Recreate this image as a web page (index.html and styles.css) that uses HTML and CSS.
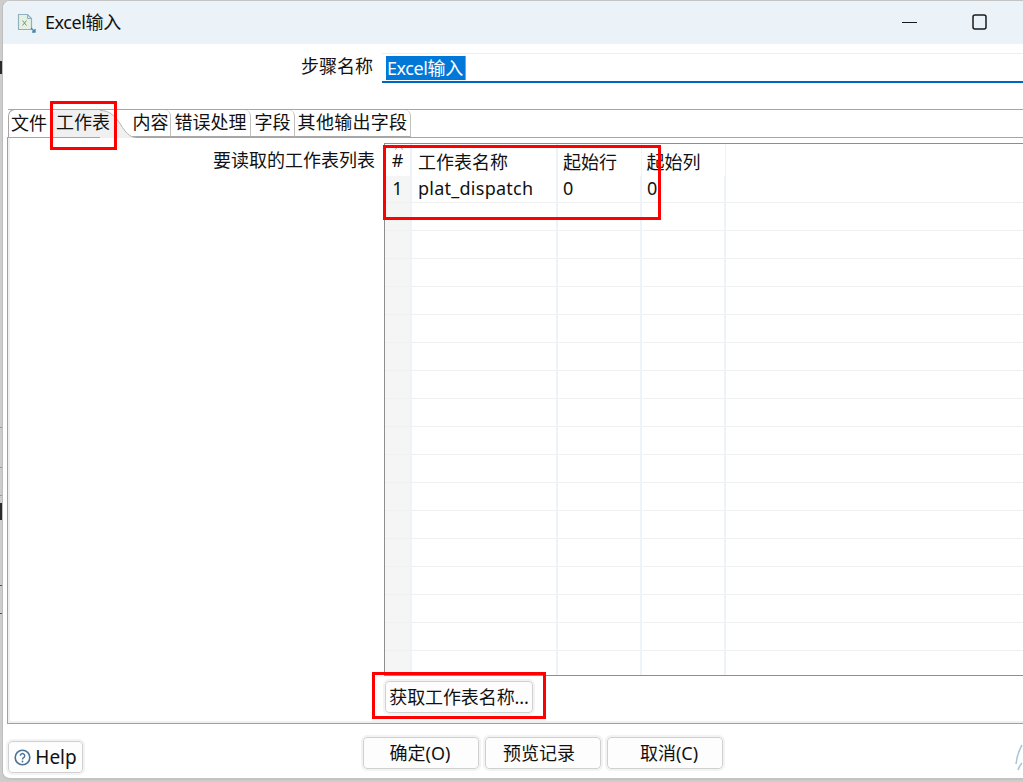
FILE: index.html
```html
<!DOCTYPE html>
<html lang="zh-CN">
<head>
<meta charset="utf-8">
<title>Excel输入</title>
<link rel="stylesheet" href="styles.css">
</head>
<body>
<div class="window">
  <header class="titlebar">
    <svg class="app-icon" width="20" height="22" viewBox="0 0 20 22">
      <path d="M1.5 1.5h9l4 4v11h-13z" fill="#e6f1e4" stroke="#8fb1bd" stroke-width="1.2"/>
      <path d="M10.500 1.500v4h4" fill="none" stroke="#8fb1bd"/>
      <path d="M5.500 7.500l4 5M9.500 7.500l-4 5" stroke="#6f9a78" fill="none"/>
      <path d="M14 15l4 4M18 16v3h-3" stroke="#4f86ad" stroke-width="1.4" fill="none"/>
    </svg>
    <span class="title">Excel输入</span>
    <span class="win-controls">
      <svg width="15" height="14" viewBox="0 0 15 14"><path d="M0 7.500h15" stroke="#1a1a1a"/></svg>
      <svg width="15" height="16" viewBox="0 0 15 16"><rect x="1" y="1" width="13" height="14" rx="2" fill="none" stroke="#1a1a1a" stroke-width="1.500"/></svg>
    </span>
  </header>

  <div class="step-row">
    <label class="field-label">步骤名称</label>
    <div class="step-input"><span class="selected">Excel输入</span></div>
  </div>

  <nav class="tabs">
    <span class="tab first">文件</span>
    <span class="tab active"><span class="active-text">工作表</span></span>
    <svg class="tab-curve" width="36" height="28" viewBox="0 0 36 28"><path d="M0 0C10 0 15 6 21 15C25 22 30 27.500 36 27.500V28H0Z" fill="#f0f0f0"/><path d="M0 .5C10 .5 15 6 21 15C25 22 30 27.500 36 27.500" fill="none" stroke="#b4b4b4"/></svg>
    <span class="tab after-active">内容</span>
    <span class="tab wide-four">错误处理</span>
    <span class="tab">字段</span>
    <span class="tab wide-six">其他输出字段</span>
  </nav>

  <section class="panel">
    <div class="sheet-row">
      <label class="field-label list-label">要读取的工作表列表</label>
      <div class="grid-wrap">
        <table class="grid">
          <colgroup><col class="c0"><col class="c1"><col class="c2"><col class="c3"><col></colgroup>
          <thead><tr><th class="num">#</th><th>工作表名称</th><th>起始行</th><th>起始列</th><th class="fill"></th></tr></thead>
          <tbody>
            <tr class="first-row"><td class="num">1</td><td class="sheet-name">plat_dispatch</td><td>0</td><td>0</td><td></td></tr>
            <tr><td class="num"></td><td></td><td></td><td></td><td></td></tr>
            <tr><td class="num"></td><td></td><td></td><td></td><td></td></tr>
            <tr><td class="num"></td><td></td><td></td><td></td><td></td></tr>
            <tr><td class="num"></td><td></td><td></td><td></td><td></td></tr>
            <tr><td class="num"></td><td></td><td></td><td></td><td></td></tr>
            <tr><td class="num"></td><td></td><td></td><td></td><td></td></tr>
            <tr><td class="num"></td><td></td><td></td><td></td><td></td></tr>
            <tr><td class="num"></td><td></td><td></td><td></td><td></td></tr>
            <tr><td class="num"></td><td></td><td></td><td></td><td></td></tr>
            <tr><td class="num"></td><td></td><td></td><td></td><td></td></tr>
            <tr><td class="num"></td><td></td><td></td><td></td><td></td></tr>
            <tr><td class="num"></td><td></td><td></td><td></td><td></td></tr>
            <tr><td class="num"></td><td></td><td></td><td></td><td></td></tr>
            <tr><td class="num"></td><td></td><td></td><td></td><td></td></tr>
            <tr><td class="num"></td><td></td><td></td><td></td><td></td></tr>
            <tr><td class="num"></td><td></td><td></td><td></td><td></td></tr>
            <tr class="last-row"><td class="num"></td><td></td><td></td><td></td><td></td></tr>
          </tbody>
        </table>
        <svg class="sort-mark" width="10" height="5" viewBox="0 0 10 5"><path d="M1 4.500L5 1l4 3.500" fill="none" stroke="#9a9a9a"/></svg>
      </div>
    </div>
    <div class="get-row"><button class="btn get-btn">获取工作表名称...</button></div>
  </section>

  <footer class="footer">
    <button class="btn help-btn">
      <svg width="17" height="17" viewBox="0 0 17 17"><circle cx="8.500" cy="8.500" r="7.300" fill="#fff" stroke="#4a7396" stroke-width="1.600"/><path d="M6.300 6.700a2.200 2.200 0 1 1 3.400 1.900c-.8.500-1.200.9-1.200 1.800" fill="none" stroke="#4a7396" stroke-width="1.400"/><circle cx="8.500" cy="12.500" r=".9" fill="#4a7396"/></svg>
      Help
    </button>
    <div class="actions">
      <button class="btn action action-ok">确定(O)</button>
      <button class="btn action action-preview">预览记录</button>
      <button class="btn action action-cancel">取消(C)</button>
    </div>
    <svg class="corner-mark" width="8" height="28" viewBox="0 0 8 28"><path d="M1 20C2 12 4 6 7 1M3 26c1-3 2-5 4-7" fill="none" stroke="#a9c3d8" stroke-width="1.500"/></svg>
  </footer>
</div>

<div class="mark mark-tab"></div>
<div class="mark mark-table"></div>
<div class="mark mark-btn"></div>
</body>
</html>
```
FILE: styles.css
```css
* { box-sizing: border-box; }
html, body { margin: 0; height: 100%; overflow: hidden; }
body {
  background-color: #cdcdcd;
  background-image:
    linear-gradient(#2a2a2a, #2a2a2a),
    linear-gradient(#2a2a2a, #2a2a2a),
    linear-gradient(#999, #999),
    linear-gradient(#999, #999),
    linear-gradient(#999, #999),
    linear-gradient(#555, #555),
    linear-gradient(#555, #555);
  background-size: 2px 17px, 2px 13px, 2px 1px, 2px 1px, 2px 1px, 2px 1px, 2px 1px;
  background-position: 0 503px, 0 61px, 0 427px, 0 467px, 0 495px, 0 585px, 0 613px;
  background-repeat: no-repeat;
  font-family: "Noto Sans", "Noto Sans CJK SC", sans-serif;
  font-size: 18px;
  color: #111;
  position: relative;
}
.window {
  position: relative;
  margin-left: 2px;
  width: 1021px;
  height: 780px;
  background: #fff;
  border-top: 1px solid #c4c4c4;
  border-bottom: 2px solid #c4c4c4;
  border-left: 1px solid #bdbdbd;
  border-radius: 8px 0 0 8px;
  overflow: hidden;
  display: flex;
  flex-direction: column;
}
.titlebar {
  height: 43px;
  flex: none;
  background: #ebf3f9;
  display: flex;
  align-items: center;
  padding-left: 14px;
  gap: 8px;
}
.app-icon { flex: none; margin-top: 3px; }
.title { line-height: 24px; letter-spacing: -.4px; margin-top: -1px; }
.win-controls {
  margin-left: auto;
  margin-right: 36px;
  margin-bottom: 2px;
  display: flex;
  align-items: center;
  gap: 55px;
}
.step-row {
  display: flex;
  align-items: center;
  height: 30px;
  margin-top: 9px;
  flex: none;
}
.field-label {
  width: 371px;
  text-align: right;
  line-height: 24px;
  flex: none;
}
.step-row .field-label { margin-top: -5px; margin-left: -1px; }
.step-input {
  margin-left: 9px;
  flex: 1;
  height: 30px;
  border-top: 1px solid #eee;
  border-bottom: 2px solid #0067c0;
  padding: 2px 0 0 4px;
}
.selected {
  display: inline-block;
  height: 24px;
  line-height: 24px;
  width: 80px;
  background: #0078d7;
  color: #fff;
  padding-left: 1px;
  white-space: nowrap;
  letter-spacing: -.4px;
  border-right: 1px solid #e88a3a;
}
.tabs {
  margin: 26px 0 0 5px;
  height: 28px;
  flex: none;
  display: flex;
  border-top: 1px solid #a6a6a6;
  position: relative;
}
.tab {
  height: 27px;
  line-height: 25px;
  white-space: nowrap;
  text-align: center;
  border-right: 1px solid #c0c0c0;
  border-top-right-radius: 6px;
  border-bottom: 1px solid #a6a6a6;
  flex: none;
  width: 44px;
}
.tab.after-active { width: 40px; }
.tab.wide-four { width: 80px; }
.tab.wide-six { width: 116px; letter-spacing: .3px; }
.tab.first {
  border-left: 1px solid #a6a6a6;
  border-right: none;
  border-bottom: none;
  border-top-left-radius: 7px;
  border-top-right-radius: 0;
  width: 44px;
  margin-top: -1px;
  height: 28px;
  border-top: 1px solid #a6a6a6;
  line-height: 27px;
  text-indent: -3px;
}
.tab.active {
  background: #f0f0f0;
  width: 48px;
  border: none;
  border-radius: 6px 0 0 0;
  text-align: left;
  padding-left: 4px;
}
.active-text { position: relative; z-index: 1; }
.tab-curve { flex: none; margin-right: -5px; position: relative; }
.panel {
  margin-left: 4px;
  height: 587px;
  flex: none;
  border-left: 1px solid #a0a0a0;
  border-top: 1px solid #a6a6a6;
  border-bottom: 1px solid #a0a0a0;
  box-shadow: inset 2px 0 0 #f0f0f0, inset 0 -2px 0 #f0f0f0;
  display: flex;
  flex-direction: column;
}
.sheet-row {
  display: flex;
  padding-top: 5px;
  height: 538px;
  flex: none;
}
.list-label {
  width: 367px;
  padding-top: 5px;
  line-height: 24px;
}
.grid-wrap {
  margin-left: 9px;
  flex: 1;
  height: 533px;
  position: relative;
  border-top: 1px solid #8e8e8e;
  border-left: 1px solid #8e8e8e;
  border-bottom: 1px solid #8e8e8e;
  overflow: hidden;
}
.sort-mark { position: absolute; left: 9px; top: 1px; }
.grid {
  width: 100%;
  border-collapse: collapse;
  table-layout: fixed;
}
.c0 { width: 26px; }
.c1 { width: 146px; }
.c2 { width: 84px; }
.c3 { width: 84px; }
.grid th, .grid td {
  font-weight: 400;
  text-align: left;
  padding: 0 0 0 6px;
  border-right: 2px solid #eef2f9;
  border-bottom: 1px solid #f0f0f0;
  height: 28px;
  line-height: 24px;
  white-space: nowrap;
}
.grid td:last-child, .grid th:last-child { border-right: none; }
.grid thead th { height: 32px; border-bottom: none; padding-top: 3px; }
.grid th:nth-child(3), .grid th:nth-child(4) { border-right: 1px solid #eef2f9; }
.grid th:nth-child(3), .grid td:nth-child(3), .grid th:nth-child(4), .grid td:nth-child(4) { padding-left: 5px; }
.grid th.num, .grid td.num { text-align: center; padding: 0; }
.grid td.num { background: #f5f5f5; }
.grid .first-row td { height: 26px; padding-bottom: 2px; }
.grid .sheet-name { letter-spacing: .25px; }
.grid .last-row td { border-bottom: none; height: 25px; }
.get-row { padding: 5px 0 0 377px; flex: none; }
.btn {
  font: inherit;
  color: inherit;
  background: #fdfdfd;
  border: 1px solid #d0d0d0;
  border-radius: 4px;
  outline: 2px solid #f3f3f3;
  padding: 0;
}
.get-btn { width: 148px; height: 32px; line-height: 24px; letter-spacing: -.1px; }
.footer {
  position: relative;
  flex: 1;
  display: flex;
  padding-left: 5px;
}
.help-btn {
  margin-top: 17px;
  height: 32px;
  width: 75px;
  display: flex;
  align-items: center;
  justify-content: center;
  gap: 4px;
  font-size: 19px;
}
.actions {
  margin: 13px 0 0 280px;
  display: flex;
  gap: 6px;
}
.action { width: 116px; height: 32px; line-height: 24px; }
.action-ok { padding-right: 2px; }
.action-preview { padding-right: 8px; }
.action-cancel { padding-left: 8px; }
.corner-mark { position: absolute; right: 0; top: 20px; }
.mark {
  position: absolute;
  border: 3px solid #ff0000;
  pointer-events: none;
}
.mark-tab { left: 50px; top: 101px; width: 67px; height: 49px; }
.mark-table { left: 383px; top: 145px; width: 278px; height: 75px; }
.mark-btn { left: 372px; top: 672px; width: 174px; height: 47px; }
```
